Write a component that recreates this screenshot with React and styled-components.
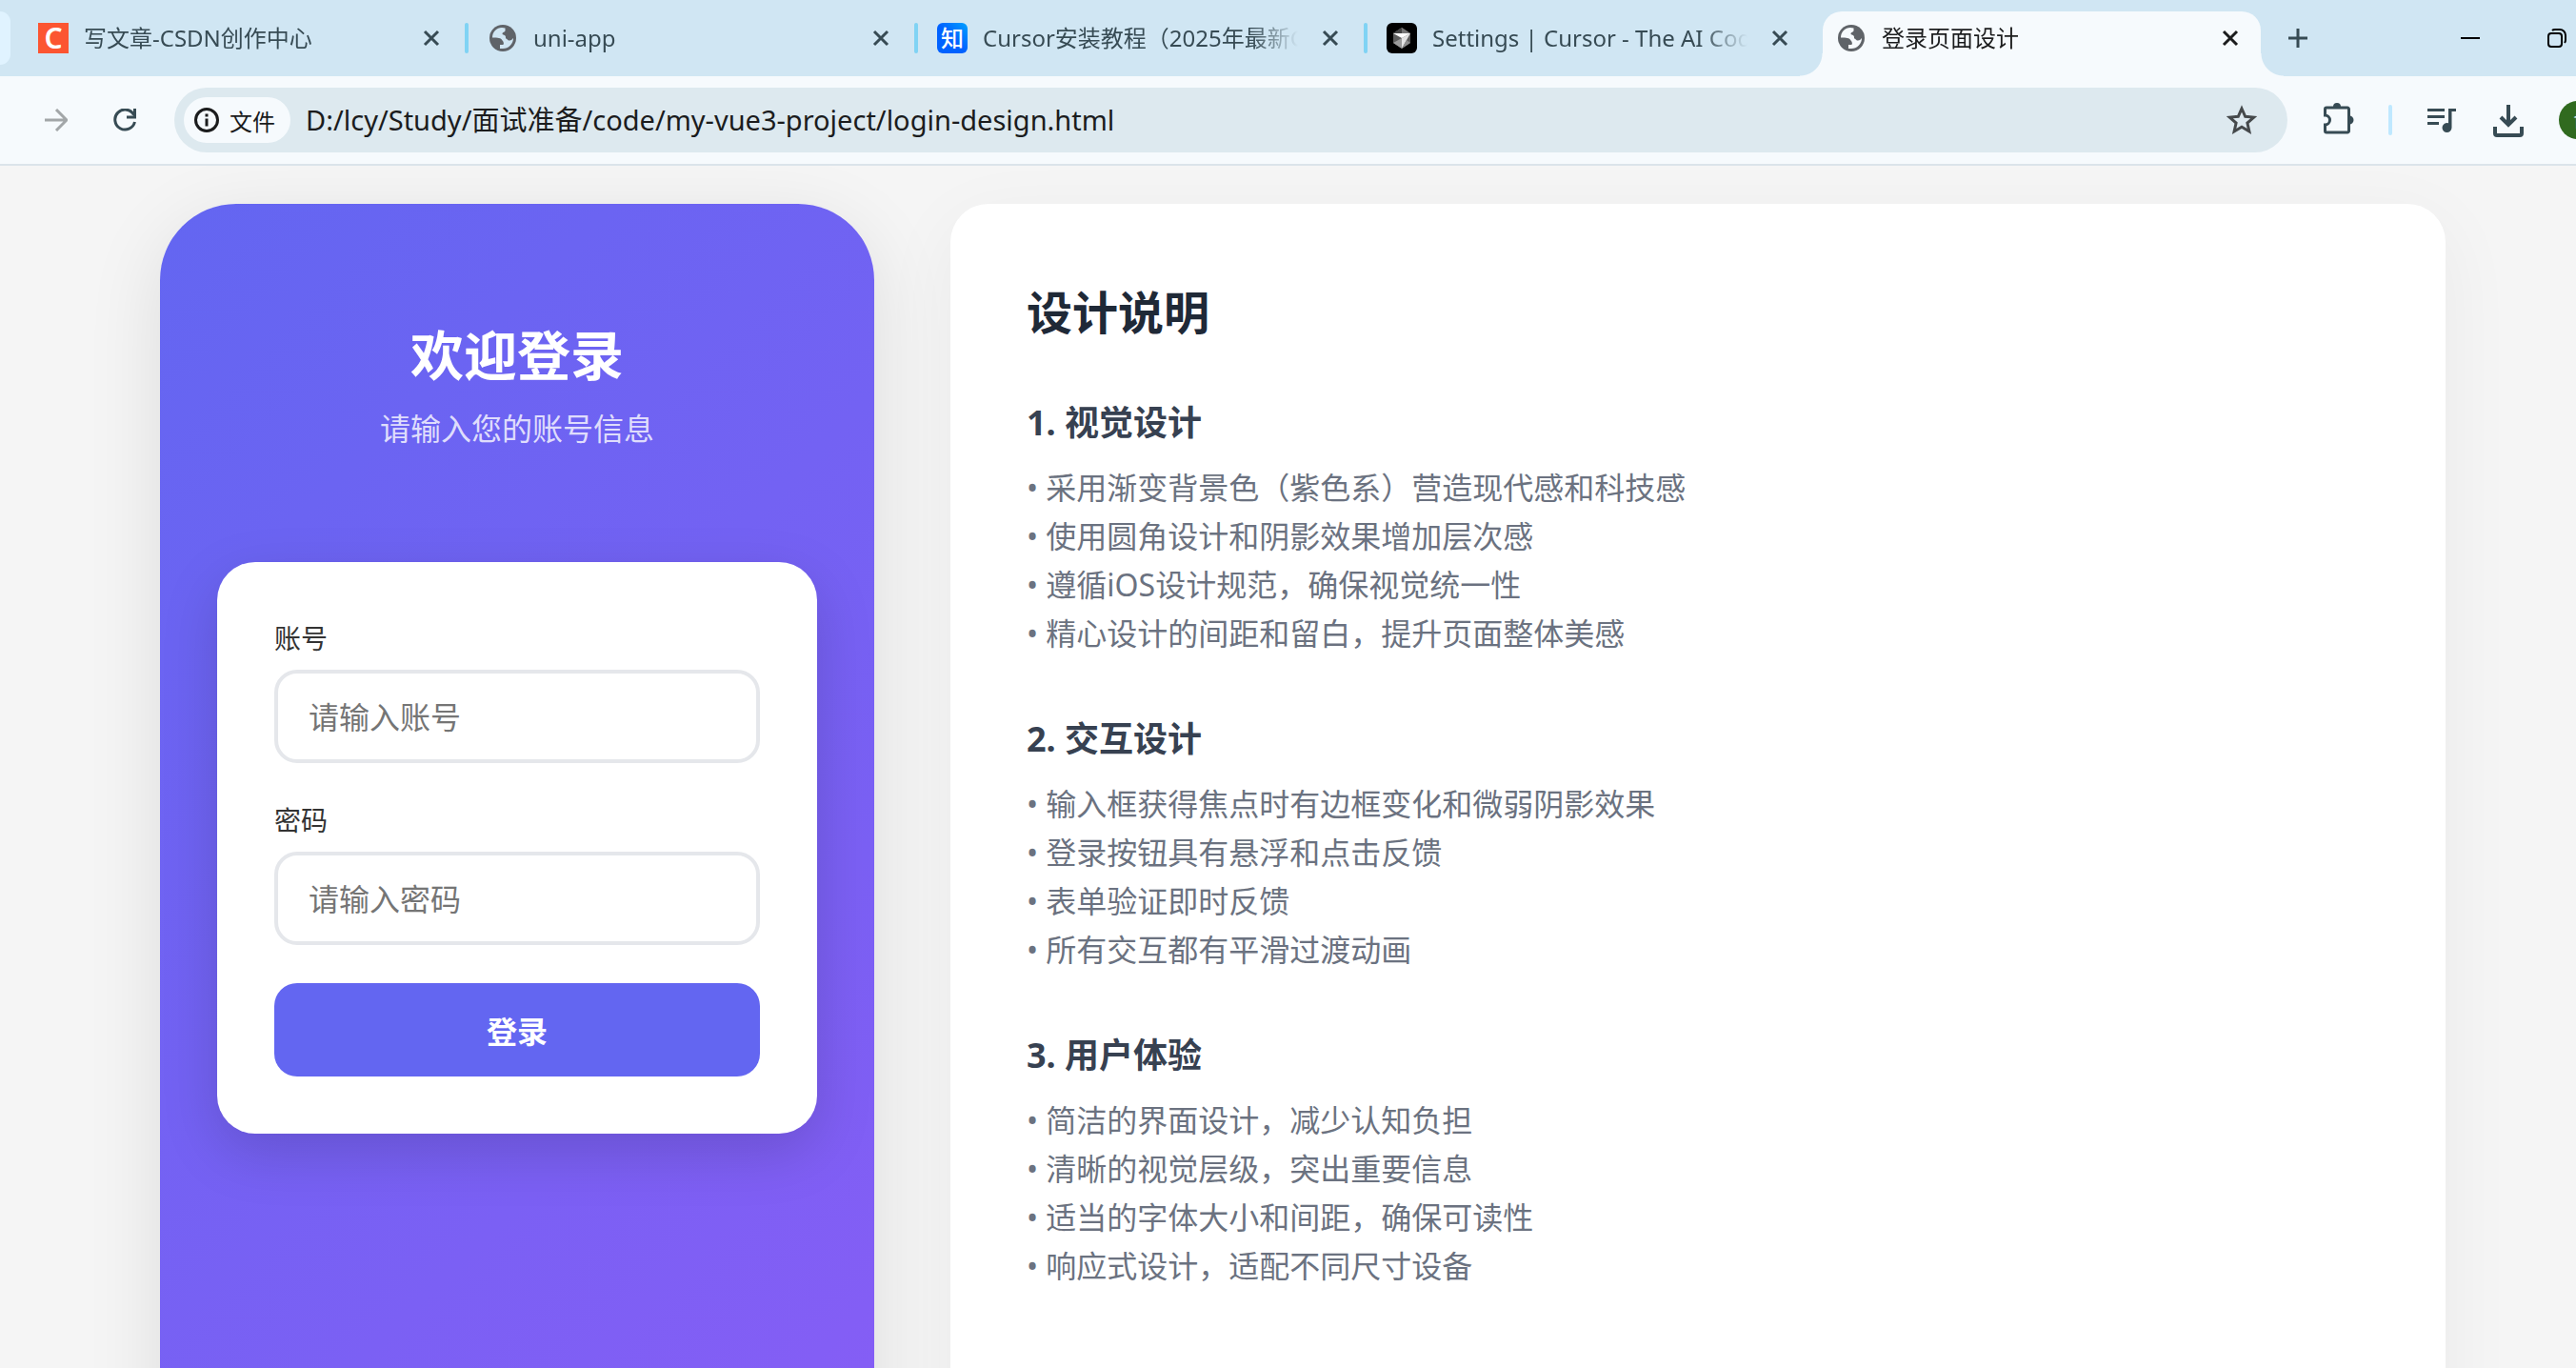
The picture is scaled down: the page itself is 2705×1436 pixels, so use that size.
import React from "react";
import styled, { createGlobalStyle, css } from "styled-components";

const GlobalStyle = createGlobalStyle`
  *, *::before, *::after { box-sizing: border-box; }
  body {
    margin: 0;
    background: #f5f5f5;
    font-family: "Noto Sans", "Noto Sans CJK SC", sans-serif;
  }
  button, input { font: inherit; }
  h1, h2, h3, p, ul { margin: 0; padding: 0; }
`;

const Window = styled.div`
  height: 100vh;
  display: flex;
  flex-direction: column;
  overflow: hidden;
`;

/* ---------- browser chrome ---------- */

const TabStrip = styled.header`
  height: 80px;
  flex: none;
  display: flex;
  align-items: flex-end;
  background: #d0e6f3;
`;

const PreviousTab = styled.div`
  flex: none;
  align-self: flex-start;
  width: 11px;
  height: 56px;
  margin: 12px 9px 0 0;
  border-radius: 0 20px 20px 0;
  background: #e0f3ff;
`;

const Tab = styled.div`
  flex: 0 1 472px;
  min-width: 0;
  height: 80px;
  display: flex;
  align-items: center;
  padding-left: 20px;
  color: #374b54;

  ${(p) =>
    p.$active &&
    css`
      position: relative;
      flex-basis: 460px;
      height: 68px;
      margin: 0 6px;
      padding: 0 0 12px 14px;
      border-radius: 20px 20px 0 0;
      background: #f6fafd;
      color: #1b1c1d;

      &::before,
      &::after {
        content: "";
        position: absolute;
        bottom: 0;
        width: 24px;
        height: 24px;
      }
      &::before {
        right: 100%;
        background: radial-gradient(circle at 0 0, transparent 23px, #f6fafd 24px);
      }
      &::after {
        left: 100%;
        background: radial-gradient(circle at 100% 0, transparent 23px, #f6fafd 24px);
      }
    `}
`;

const TabTitle = styled.span`
  flex: 1;
  min-width: 0;
  margin: 0 14px 0 16px;
  overflow: hidden;
  white-space: nowrap;
  font-size: 24px;
  line-height: 36px;
  mask-image: linear-gradient(to right, #000 calc(100% - 48px), transparent);
`;

const IconButton = styled.button`
  flex: none;
  width: 32px;
  height: 32px;
  padding: 0;
  border: 0;
  background: none;
  color: ${(p) => p.$color || "inherit"};
  display: flex;
  align-items: center;
  justify-content: center;

  svg { flex: none; }
`;

const CloseButton = styled(IconButton)`
  width: 40px;
  margin-right: ${(p) => (p.$active ? "12px" : "15px")};
`;

const TabDivider = styled.span`
  flex: none;
  width: 4px;
  height: 32px;
  border-radius: 2px;
  background: ${(p) => (p.$hidden ? "transparent" : "#80d3f4")};
`;

const Favicon = styled.span`
  flex: none;
  width: 32px;
  height: 32px;
  display: flex;
  align-items: center;
  justify-content: center;
  border-radius: ${(p) => p.$radius || "0"};
  background: ${(p) => p.$bg || "none"};
  color: #fff;
  font-size: ${(p) => p.$size || "24px"};
  line-height: 32px;
  font-weight: ${(p) => p.$weight || 500};
`;

const NewTabButton = styled(IconButton)`
  margin: 0 0 24px 17px;
`;

const WindowControls = styled.div`
  margin: 0 4px 24px auto;
  display: flex;
  gap: 59px;
`;

const Toolbar = styled.nav`
  flex: none;
  height: 94px;
  display: flex;
  align-items: center;
  padding-left: 43px;
  background: #f6fafd;
  border-bottom: 2px solid #dbe4ea;
`;

const NavButtons = styled.div`
  display: flex;
  gap: 40px;
  margin-right: 36px;
`;

const AddressBar = styled.div`
  flex: 1;
  min-width: 0;
  height: 68px;
  display: flex;
  align-items: center;
  padding: 0 32px 0 10px;
  border-radius: 34px;
  background: #dde9ef;
`;

const SchemeChip = styled.button`
  flex: none;
  height: 48px;
  display: flex;
  align-items: center;
  gap: 10px;
  padding: 0 16px 0 10px;
  border: 0;
  border-radius: 24px;
  background: #f6fafd;
  color: #1b1c1d;
  font-size: 24px;
`;

const UrlInput = styled.input`
  flex: 1;
  min-width: 0;
  margin-left: 16px;
  padding: 0;
  border: 0;
  outline: 0;
  background: none;
  color: #1b1c1d;
  font-size: 29px;
  line-height: 40px;
`;

const ToolbarActions = styled.div`
  flex: none;
  display: flex;
  align-items: center;
  gap: 37px;
  margin-left: 37px;
`;

const ToolbarDivider = styled.span`
  width: 4px;
  height: 32px;
  border-radius: 2px;
  background: #bfe8ff;
`;

const Avatar = styled.button`
  width: 40px;
  height: 40px;
  margin-right: -22px;
  padding: 0;
  border: 0;
  border-radius: 50%;
  background: #306a1f;
  color: #fff;
  font-size: 24px;
  line-height: 40px;
`;

/* ---------- page ---------- */

const Page = styled.main`
  flex: 1;
  min-height: 0;
  overflow: hidden;
  display: flex;
  align-items: flex-start;
  gap: 80px;
  padding: 40px 137px 0 168px;
`;

const Phone = styled.section`
  flex: none;
  width: 750px;
  min-height: 1624px;
  padding: 118px 60px 60px;
  border-radius: 80px;
  background: linear-gradient(135deg, #6366f1 0%, #8b5cf6 100%);
  box-shadow: 0 20px 80px rgba(0, 0, 0, 0.1);
`;

const Welcome = styled.div`
  display: flex;
  flex-direction: column;
  gap: 16px;
  margin-bottom: 118px;
  text-align: center;
  color: #fff;
`;

const WelcomeTitle = styled.h1`
  font-size: 56px;
  line-height: 80px;
  font-weight: 700;
`;

const WelcomeText = styled.p`
  font-size: 32px;
  line-height: 44px;
  color: rgba(255, 255, 255, 0.8);
`;

const LoginCard = styled.form`
  display: flex;
  flex-direction: column;
  gap: 40px;
  padding: 60px;
  border-radius: 40px;
  background: #fff;
  box-shadow: 0 20px 60px rgba(0, 0, 0, 0.15);
`;

const Field = styled.div`
  display: flex;
  flex-direction: column;
  gap: 12px;
`;

const Label = styled.label`
  font-size: 28px;
  line-height: 41px;
  color: #333;
`;

const TextInput = styled.input`
  width: 100%;
  height: 98px;
  padding: 0 32px;
  border: 4px solid #e5e7eb;
  border-radius: 24px;
  outline: 0;
  background: #fff;
  font-size: 32px;
  color: #333;

  &::placeholder {
    color: #757575;
    opacity: 1;
  }
`;

const SubmitButton = styled.button`
  height: 98px;
  border: 0;
  border-radius: 24px;
  background: #6366f1;
  color: #fff;
  font-size: 32px;
  font-weight: 700;
`;

const Notes = styled.article`
  flex: 1;
  min-width: 0;
  min-height: 1624px;
  padding: 80px;
  border-radius: 40px;
  background: #fff;
  box-shadow: 0 20px 80px rgba(0, 0, 0, 0.05);
`;

const NotesTitle = styled.h2`
  margin-bottom: 58px;
  font-size: 48px;
  line-height: 68px;
  font-weight: 700;
  color: #1f2937;
`;

const NoteSection = styled.section`
  margin-bottom: 62px;
`;

const NoteHeading = styled.h3`
  margin-bottom: 18px;
  font-size: 36px;
  line-height: 48px;
  font-weight: 700;
  color: #374151;
`;

const NoteList = styled.ul`
  list-style: none;
  color: #6b7280;
  font-size: 32px;
  line-height: 51px;
`;

/* ---------- icons ---------- */

const CloseIcon = () => (
  <svg width="18" height="18" viewBox="0 0 18 18" fill="none" stroke="currentColor" strokeWidth="3">
    <path d="M2 2l14 14M16 2L2 16" />
  </svg>
);

const GlobeIcon = ({ land }) => (
  <svg width="32" height="32" viewBox="-2 -2 32 32">
    <circle cx="14" cy="14" r="14" fill="#5f6368" />
    <path
      fill={land}
      d="M3 13.5C3 7.500 7.500 3 13 3l3.500.4V6c0 2-3 1.500-3 3.500 0 1.500 3.500.5 3.500 3.500v1.500c2 0 1.500 2 4 2 2 0 3-1.500 4-2.500A11 11 0 0 1 14 25h-3v-4h3c1.500 0 1-3-.5-4.500C12 13.500 9 13.500 3 13.500z"
    />
  </svg>
);

const CursorLogo = () => (
  <svg width="32" height="32" viewBox="0 0 32 32">
    <path d="M16 5l9 6v10l-9 6-9-6V11z" fill="#5c5c5c" />
    <path d="M16 5l9 6H7z" fill="#777" />
    <path d="M16 5v6H7z" fill="#444" />
    <path d="M7 11h18l-9 5z" fill="#fff" />
    <path d="M25 11l-9 16V16z" fill="#e3e3e3" />
    <path d="M25 21l-9 6 5-9z" fill="#8d8d8d" />
    <path d="M7 21l9-5v11z" fill="#9a9a9a" />
  </svg>
);

const PlusIcon = () => (
  <svg width="22" height="22" viewBox="0 0 22 22" stroke="currentColor" strokeWidth="3">
    <path d="M11 1v20M1 11h20" />
  </svg>
);

const MinimizeIcon = () => (
  <svg width="20" height="20" viewBox="0 0 20 20" stroke="currentColor" strokeWidth="2">
    <path d="M0 10h20" />
  </svg>
);

const RestoreIcon = () => (
  <svg width="20" height="20" viewBox="0 0 20 20" fill="none" stroke="currentColor" strokeWidth="2">
    <rect x="1" y="5" width="14" height="14" rx="3" />
    <path d="M5 2C6 1 7 1 8 1h5a6 6 0 0 1 6 6v5c0 1-.2 2-1 3" />
  </svg>
);

const ForwardIcon = () => (
  <svg width="24" height="24" viewBox="0 0 24 24" fill="none" stroke="currentColor" strokeWidth="3">
    <path d="M0 12h22M12 1l11 11-11 11" />
  </svg>
);

const ReloadIcon = () => (
  <svg width="24" height="24" viewBox="0 0 24 24" fill="none" stroke="currentColor" strokeWidth="3">
    <path d="M21.500 6.500A10.500 10.500 0 1 0 22.500 14M22.500 0v9H14" />
  </svg>
);

const InfoIcon = () => (
  <svg width="28" height="28" viewBox="0 0 28 28" fill="none" stroke="currentColor" strokeWidth="3">
    <circle cx="14" cy="14" r="11.500" />
    <path d="M14 12.500v8M14 7.500v3" />
  </svg>
);

const StarIcon = () => (
  <svg width="32" height="32" viewBox="0 0 32 32" fill="none" stroke="currentColor" strokeWidth="3">
    <path d="M16 4l3.700 8.300 9 .8-6.800 6 2 8.900-7.900-4.700L8.100 28l2-8.900-6.800-6 9-.8z" />
  </svg>
);

const ExtensionIcon = () => (
  <svg width="36" height="36" viewBox="0 6 36 36" fill="none" stroke="currentColor" strokeWidth="3">
    <path d="M6 11h22a1.500 1.500 0 0 1 1.500 1.500v23A1.500 1.500 0 0 1 28 37H6a1.500 1.500 0 0 1-1.500-1.500V29a5 5 0 0 0 0-10v-6.500A1.500 1.500 0 0 1 6 11z" />
    <path d="M13 10a4 4 0 0 1 8 0zM30 19.500a4.500 4.500 0 0 1 0 9z" fill="currentColor" stroke="none" />
  </svg>
);

const MusicIcon = () => (
  <svg width="32" height="28" viewBox="0 0 32 28" fill="currentColor">
    <path d="M0 2h18v3H0zM0 9h18v3H0zM0 16h12v3H0zM22 2h8v3h-4.500v17a5 5 0 1 1-3.500-4.800z" />
  </svg>
);

const DownloadIcon = () => (
  <svg width="32" height="40" viewBox="0 0 32 40" fill="none" stroke="currentColor" strokeWidth="4">
    <path d="M16 4v20M8 17l8 8 8-8M2 27v7a2 2 0 0 0 2 2h24a2 2 0 0 0 2-2v-7" />
  </svg>
);

/* ---------- data ---------- */

const tabs = [
  { title: "写文章-CSDN创作中心", icon: <Favicon $bg="#fc5531" $size="30px" $weight="600">C</Favicon> },
  { title: "uni-app", icon: <Favicon><GlobeIcon land="#d0e6f3" /></Favicon> },
  {
    title: "Cursor安装教程（2025年最新Cursor教程）",
    icon: <Favicon $bg="linear-gradient(45deg, #0062ff 50%, #00a2ff)" $radius="6px">知</Favicon>,
  },
  { title: "Settings | Cursor - The AI Code Editor", icon: <Favicon $bg="#000" $radius="6px"><CursorLogo /></Favicon> },
  { title: "登录页面设计", active: true, icon: <Favicon><GlobeIcon land="#f6fafd" /></Favicon> },
];

const sections = [
  {
    heading: "1. 视觉设计",
    items: [
      "采用渐变背景色（紫色系）营造现代感和科技感",
      "使用圆角设计和阴影效果增加层次感",
      "遵循iOS设计规范，确保视觉统一性",
      "精心设计的间距和留白，提升页面整体美感",
    ],
  },
  {
    heading: "2. 交互设计",
    items: [
      "输入框获得焦点时有边框变化和微弱阴影效果",
      "登录按钮具有悬浮和点击反馈",
      "表单验证即时反馈",
      "所有交互都有平滑过渡动画",
    ],
  },
  {
    heading: "3. 用户体验",
    items: [
      "简洁的界面设计，减少认知负担",
      "清晰的视觉层级，突出重要信息",
      "适当的字体大小和间距，确保可读性",
      "响应式设计，适配不同尺寸设备",
    ],
  },
];

export default function App() {
  return (
    <Window lang="zh-CN">
      <GlobalStyle />
      <TabStrip>
        <PreviousTab />
        {tabs.map((tab, i) => (
          <Tab key={tab.title} $active={tab.active}>
            {tab.icon}
            <TabTitle>{tab.title}</TabTitle>
            <CloseButton type="button" aria-label="关闭" $active={tab.active}>
              <CloseIcon />
            </CloseButton>
            {!tab.active && <TabDivider $hidden={i === 3} />}
          </Tab>
        ))}
        <NewTabButton type="button" aria-label="打开新的标签页" $color="#374b54">
          <PlusIcon />
        </NewTabButton>
        <WindowControls>
          <IconButton type="button" aria-label="最小化" $color="#000">
            <MinimizeIcon />
          </IconButton>
          <IconButton type="button" aria-label="还原" $color="#000">
            <RestoreIcon />
          </IconButton>
        </WindowControls>
      </TabStrip>

      <Toolbar>
        <NavButtons>
          <IconButton type="button" aria-label="前进" $color="#a2a6a8">
            <ForwardIcon />
          </IconButton>
          <IconButton type="button" aria-label="重新加载" $color="#374b54">
            <ReloadIcon />
          </IconButton>
        </NavButtons>
        <AddressBar>
          <SchemeChip type="button">
            <InfoIcon />
            文件
          </SchemeChip>
          <UrlInput
            type="text"
            aria-label="地址栏"
            spellCheck={false}
            defaultValue="D:/lcy/Study/面试准备/code/my-vue3-project/login-design.html"
          />
          <IconButton type="button" aria-label="添加书签" $color="#45494b">
            <StarIcon />
          </IconButton>
        </AddressBar>
        <ToolbarActions>
          <IconButton type="button" aria-label="扩展程序" $color="#374b54">
            <ExtensionIcon />
          </IconButton>
          <ToolbarDivider />
          <IconButton type="button" aria-label="媒体控件" $color="#374b54">
            <MusicIcon />
          </IconButton>
          <IconButton type="button" aria-label="下载" $color="#374b54">
            <DownloadIcon />
          </IconButton>
          <Avatar type="button">f</Avatar>
        </ToolbarActions>
      </Toolbar>

      <Page>
        <Phone>
          <Welcome>
            <WelcomeTitle>欢迎登录</WelcomeTitle>
            <WelcomeText>请输入您的账号信息</WelcomeText>
          </Welcome>
          <LoginCard onSubmit={(e) => e.preventDefault()}>
            <Field>
              <Label htmlFor="account">账号</Label>
              <TextInput id="account" type="text" placeholder="请输入账号" />
            </Field>
            <Field>
              <Label htmlFor="password">密码</Label>
              <TextInput id="password" type="password" placeholder="请输入密码" />
            </Field>
            <SubmitButton type="submit">登录</SubmitButton>
          </LoginCard>
        </Phone>

        <Notes>
          <NotesTitle>设计说明</NotesTitle>
          {sections.map((section) => (
            <NoteSection key={section.heading}>
              <NoteHeading>{section.heading}</NoteHeading>
              <NoteList>
                {section.items.map((item) => (
                  <li key={item}>• {item}</li>
                ))}
              </NoteList>
            </NoteSection>
          ))}
        </Notes>
      </Page>
    </Window>
  );
}
